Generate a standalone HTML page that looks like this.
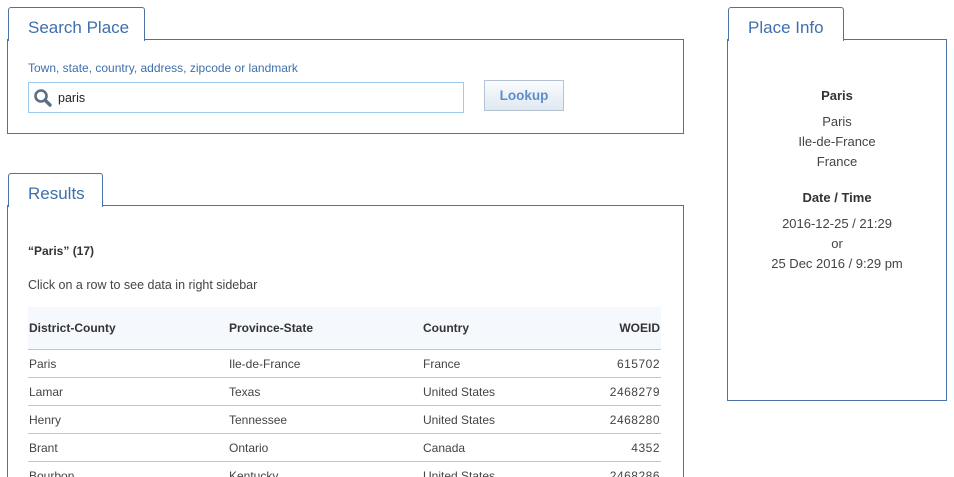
<!DOCTYPE html>
<html><head><meta charset="utf-8"><style>
*{margin:0;padding:0;box-sizing:border-box}
html,body{width:954px;height:477px;overflow:hidden;background:#fff}
body{font-family:"Liberation Sans",sans-serif;color:#444}
#wrap{position:relative;width:954px;height:477px;overflow:hidden}
.box{position:absolute;border:1px solid #4a72a6;background:#fff}
.tab{position:absolute;border:1px solid #4a72a6;border-bottom:none;border-radius:3px 3px 0 0;background:#fff;color:#3f6fae;font-size:17px;padding-left:19px;padding-top:10px;z-index:2}
.abs{position:absolute;white-space:nowrap}
.s13{font-size:12.5px}
.row{position:absolute;left:28px;width:633px;height:28px;border-bottom:1px solid #a9cdea;font-size:12px;overflow:hidden}
.row span{position:absolute;top:7px}
.c1{left:1px}.c2{left:201px}.c3{left:395px}.c4{right:1px;letter-spacing:0.5px}
.ctr{position:absolute;left:728px;width:218px;text-align:center;font-size:13px}
</style></head><body><div id="wrap">
<div class="box" style="left:7px;top:39px;width:677px;height:95px"></div>
<div class="tab" style="left:8px;top:7px;width:137px;height:34px">Search Place</div>
<div class="abs" style="left:28px;top:61px;font-size:12px;color:#3f6fae">Town, state, country, address, zipcode or landmark</div>
<div class="abs" style="left:28px;top:82px;width:436px;height:31px;border:1px solid #9cc9ec"></div>
<svg class="abs" style="left:33px;top:88px" width="20" height="20" viewBox="0 0 20 20"><circle cx="8" cy="8" r="5.5" fill="none" stroke="#5a6f82" stroke-width="2.6"/><path d="M12 12 L17 17" stroke="#5a6f82" stroke-width="3.4" stroke-linecap="round"/></svg>
<div class="abs s13" style="left:58px;top:91px;color:#222">paris</div>
<div class="abs" style="left:484px;top:80px;width:80px;height:31px;border:1px solid #b3c3d3;background:linear-gradient(#fafcfe,#e0e8f1);color:#5b8fcb;font-weight:bold;font-size:13.5px;text-align:center;line-height:29px">Lookup</div>

<div class="box" style="left:7px;top:205px;width:677px;height:272px;border-bottom:none"></div>
<div class="tab" style="left:8px;top:173px;width:95px;height:34px">Results</div>
<div class="abs" style="left:28px;top:244px;font-size:12px;font-weight:bold;color:#333">“Paris” (17)</div>
<div class="abs s13" style="left:28px;top:278px">Click on a row to see data in right sidebar</div>
<div class="row" style="top:307px;height:43px;background:#f5f9fd;font-weight:bold;color:#333"><span class="c1" style="top:14px">District-County</span><span class="c2" style="top:14px">Province-State</span><span class="c3" style="top:14px">Country</span><span class="c4" style="top:14px;letter-spacing:0">WOEID</span></div>
<div class="row" style="top:350px"><span class="c1">Paris</span><span class="c2">Ile-de-France</span><span class="c3">France</span><span class="c4">615702</span></div>
<div class="row" style="top:378px"><span class="c1">Lamar</span><span class="c2">Texas</span><span class="c3">United States</span><span class="c4">2468279</span></div>
<div class="row" style="top:406px"><span class="c1">Henry</span><span class="c2">Tennessee</span><span class="c3">United States</span><span class="c4">2468280</span></div>
<div class="row" style="top:434px"><span class="c1">Brant</span><span class="c2">Ontario</span><span class="c3">Canada</span><span class="c4">4352</span></div>
<div class="row" style="top:462px;height:15px;border-bottom:none"><span class="c1">Bourbon</span><span class="c2">Kentucky</span><span class="c3">United States</span><span class="c4">2468286</span></div>

<div class="box" style="left:727px;top:39px;width:220px;height:362px"></div>
<div class="tab" style="left:728px;top:7px;width:116px;height:34px">Place Info</div>
<div class="ctr" style="top:88px;font-weight:bold;color:#333">Paris</div>
<div class="ctr" style="top:114px">Paris</div>
<div class="ctr" style="top:134px">Ile-de-France</div>
<div class="ctr" style="top:154px">France</div>
<div class="ctr" style="top:190px;font-weight:bold;color:#333">Date / Time</div>
<div class="ctr" style="top:216px">2016-12-25 / 21:29</div>
<div class="ctr" style="top:236px">or</div>
<div class="ctr" style="top:256px">25 Dec 2016 / 9:29 pm</div>
</div></body></html>
